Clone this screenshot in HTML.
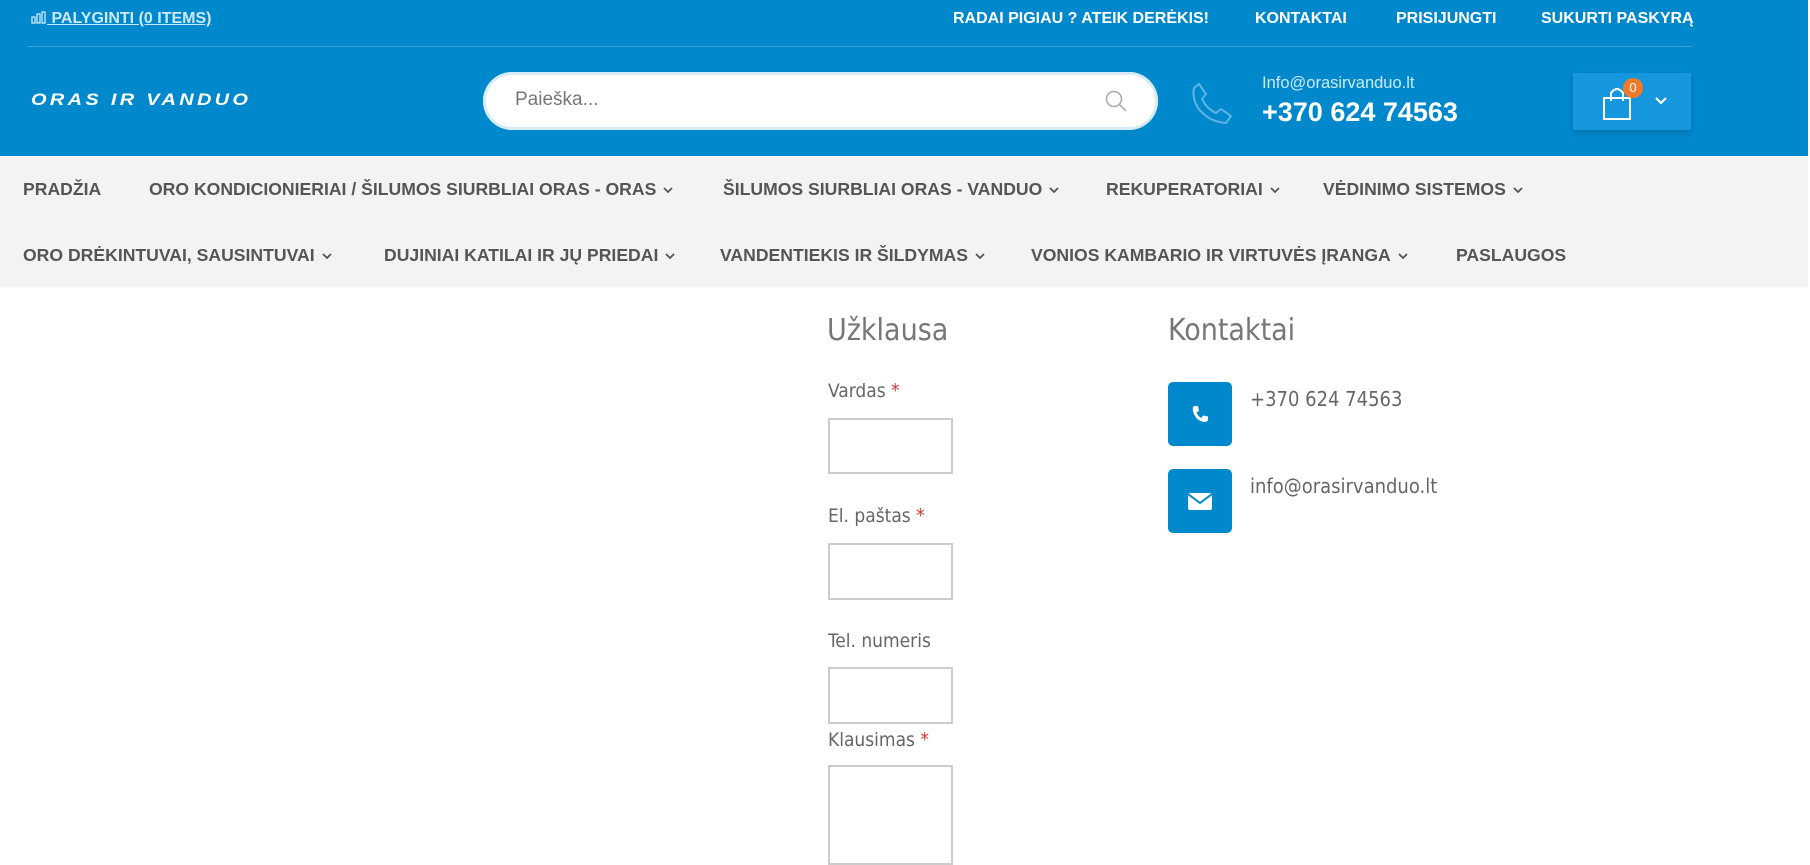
<!DOCTYPE html>
<html><head><meta charset="utf-8"><style>
*{margin:0;padding:0;box-sizing:border-box}
body{width:1810px;height:851px;overflow:hidden;background:#fff;font-family:"Liberation Sans",sans-serif;position:relative}
.hdr{position:absolute;left:0;top:0;width:1808px;height:156px;background:#0088cc}
.a{position:absolute;white-space:nowrap}
.top{color:#fff;font-size:16px;font-weight:bold;top:10px}
.sep{position:absolute;left:28px;top:46px;width:1664px;height:1px;background:#3aa3da}
.nav{position:absolute;left:0;top:156px;width:1808px;height:131px;background:#f3f3f3}
.n{position:absolute;font-size:17.6px;font-weight:bold;color:#555;white-space:nowrap}
.n svg{margin-left:7px;vertical-align:middle}
.lbl{position:absolute;left:828px;font-size:19px;color:#666;font-family:"DejaVu Sans Condensed","Liberation Sans",sans-serif;font-weight:300}
.lbl b{color:#d33;font-weight:normal}
.inp{position:absolute;left:828px;width:125px;border:2px solid #ccc;background:#fff}
.box{position:absolute;left:1168px;width:64px;height:64px;background:#0088cc;border-radius:5px}
</style></head><body>
<div class="hdr">
<div class="a top" style="left:31px;color:#cde9f8;text-decoration:underline"><svg width="16" height="13" viewBox="0 0 16 13" style="vertical-align:-1px"><g fill="none" stroke="#cde9f8" stroke-width="1.3"><rect x="1" y="6" width="3" height="6"/><rect x="6" y="3" width="3" height="9"/><rect x="11" y="1" width="3" height="11"/></g></svg> PALYGINTI (0 ITEMS)</div>
<div class="a top" style="left:953px">RADAI PIGIAU ? ATEIK DERĖKIS!</div>
<div class="a top" style="left:1255px">KONTAKTAI</div>
<div class="a top" style="left:1396px">PRISIJUNGTI</div>
<div class="a top" style="left:1541px">SUKURTI PASKYRĄ</div>
<div class="sep"></div>
<div class="a" style="left:31px;top:89px;color:#fff;font-size:20px;font-weight:bold;font-style:italic;letter-spacing:3.3px;transform:scaleY(0.85)">ORAS IR VANDUO</div>
<div class="a" style="left:483px;top:72px;width:675px;height:58px;background:#fff;border-radius:29px;box-shadow:inset 0 0 0 3px #d8ecf7"></div>
<div class="a" style="left:515px;top:89px;font-size:19px;color:#777">Paieška...</div>
<svg class="a" style="left:1104px;top:89px" width="24" height="24" viewBox="0 0 24 24"><circle cx="10" cy="10" r="7.5" fill="none" stroke="#aaa" stroke-width="1.5"/><line x1="15.5" y1="15.5" x2="22" y2="22" stroke="#aaa" stroke-width="1.5"/></svg>
<svg class="a" style="left:1189px;top:80px" width="46" height="46" viewBox="0 0 46 46"><path d="M10 4 L17 14 L13 19 Q18 29 27 33 L32 29 L42 36 L37 43 Q20 42 9 28 Q3 18 5 8 Z" fill="none" stroke="#5db5e5" stroke-width="2"/></svg>
<div class="a" style="left:1262px;top:74px;color:#cde9f8;font-size:16.5px">Info@orasirvanduo.lt</div>
<div class="a" style="left:1262px;top:97px;color:#fff;font-size:27px;font-weight:bold">+370 624 74563</div>
<div class="a" style="left:1573px;top:73px;width:118px;height:57px;background:#1597de;box-shadow:0 3px 6px rgba(0,0,0,.15)"></div>
<svg class="a" style="left:1601px;top:85px" width="34" height="36" viewBox="0 0 34 36"><path d="M3 13 H29 V34 H3 Z" fill="none" stroke="#fff" stroke-width="2"/><path d="M10 16 V8 Q16 0 22 8 V16" fill="none" stroke="#fff" stroke-width="2"/></svg>
<div class="a" style="left:1623px;top:78px;width:20px;height:20px;border-radius:10px;background:#f07a2b;color:#fff;font-size:13px;text-align:center;line-height:20px">0</div>
<svg class="a" style="left:1655px;top:97px" width="12" height="8" viewBox="0 0 12 8"><path d="M1 1 L6 6 L11 1" fill="none" stroke="#fff" stroke-width="2"/></svg>
</div>
<div class="nav"></div>
<div class="n" style="left:23px;top:179px">PRADŽIA</div>
<div class="n" style="left:149px;top:179px">ORO KONDICIONIERIAI / ŠILUMOS SIURBLIAI ORAS - ORAS<svg width="10" height="7" viewBox="0 0 10 7"><path d="M1 1 L5 5 L9 1" fill="none" stroke="#555" stroke-width="1.8"/></svg></div>
<div class="n" style="left:723px;top:179px">ŠILUMOS SIURBLIAI ORAS - VANDUO<svg width="10" height="7" viewBox="0 0 10 7"><path d="M1 1 L5 5 L9 1" fill="none" stroke="#555" stroke-width="1.8"/></svg></div>
<div class="n" style="left:1106px;top:179px">REKUPERATORIAI<svg width="10" height="7" viewBox="0 0 10 7"><path d="M1 1 L5 5 L9 1" fill="none" stroke="#555" stroke-width="1.8"/></svg></div>
<div class="n" style="left:1323px;top:179px">VĖDINIMO SISTEMOS<svg width="10" height="7" viewBox="0 0 10 7"><path d="M1 1 L5 5 L9 1" fill="none" stroke="#555" stroke-width="1.8"/></svg></div>
<div class="n" style="left:23px;top:245px">ORO DRĖKINTUVAI, SAUSINTUVAI<svg width="10" height="7" viewBox="0 0 10 7"><path d="M1 1 L5 5 L9 1" fill="none" stroke="#555" stroke-width="1.8"/></svg></div>
<div class="n" style="left:384px;top:245px">DUJINIAI KATILAI IR JŲ PRIEDAI<svg width="10" height="7" viewBox="0 0 10 7"><path d="M1 1 L5 5 L9 1" fill="none" stroke="#555" stroke-width="1.8"/></svg></div>
<div class="n" style="left:720px;top:245px">VANDENTIEKIS IR ŠILDYMAS<svg width="10" height="7" viewBox="0 0 10 7"><path d="M1 1 L5 5 L9 1" fill="none" stroke="#555" stroke-width="1.8"/></svg></div>
<div class="n" style="left:1031px;top:245px">VONIOS KAMBARIO IR VIRTUVĖS ĮRANGA<svg width="10" height="7" viewBox="0 0 10 7"><path d="M1 1 L5 5 L9 1" fill="none" stroke="#555" stroke-width="1.8"/></svg></div>
<div class="n" style="left:1456px;top:245px">PASLAUGOS</div>

<div class="a" style="left:827px;top:313px;font-size:30px;color:#777;font-family:'DejaVu Sans Condensed','Liberation Sans',sans-serif;font-weight:200">Užklausa</div>
<div class="a" style="left:1168px;top:313px;font-size:30px;color:#777;font-family:'DejaVu Sans Condensed','Liberation Sans',sans-serif;font-weight:200">Kontaktai</div>
<div class="lbl" style="top:380px">Vardas <b>*</b></div>
<div class="inp" style="top:418px;height:56px"></div>
<div class="lbl" style="top:505px">El. paštas <b>*</b></div>
<div class="inp" style="top:543px;height:57px"></div>
<div class="lbl" style="top:630px">Tel. numeris</div>
<div class="inp" style="top:667px;height:57px"></div>
<div class="lbl" style="top:729px">Klausimas <b>*</b></div>
<div class="inp" style="top:765px;height:100px"></div>

<div class="box" style="top:382px"><svg style="position:absolute;left:22px;top:22px" width="20" height="20" viewBox="0 0 20 20"><path d="M4 2 L8 2 L9 7 L6.5 8.5 Q8 12.5 11.5 14 L13 11.5 L18 12.5 L18 16 Q17 18 14 18 Q8 17 5 12 Q2 7 3 3 Z" fill="#fff"/></svg></div>
<div class="box" style="top:469px"><svg style="position:absolute;left:20px;top:24px" width="24" height="17" viewBox="0 0 24 17"><rect x="0" y="0" width="24" height="17" rx="2" fill="#fff"/><path d="M0 1 L12 10 L24 1" fill="none" stroke="#0088cc" stroke-width="2"/></svg></div>
<div class="a" style="left:1250px;top:387px;font-size:20px;color:#666;font-family:'DejaVu Sans Condensed','Liberation Sans',sans-serif;font-weight:300">+370 624 74563</div>
<div class="a" style="left:1250px;top:474px;font-size:20px;color:#666;font-family:'DejaVu Sans Condensed','Liberation Sans',sans-serif;font-weight:300">info@orasirvanduo.lt</div>
</body></html>
